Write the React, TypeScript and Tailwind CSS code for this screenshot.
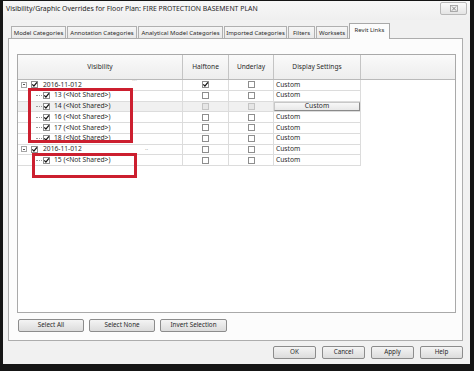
import React from 'react';

type Row = { level: 0 | 1; label: string; half?: boolean; sel?: boolean; dots?: string; dotsLeft?: number; dotsTop?: number };

const rows: Row[] = [
  { level: 0, label: '2016-11-012', half: true, dots: '···', dotsLeft: 114, dotsTop: -3 },
  { level: 1, label: '13 (<Not Shared>)' },
  { level: 1, label: '14 (<Not Shared>)', sel: true },
  { level: 1, label: '16 (<Not Shared>)' },
  { level: 1, label: '17 (<Not Shared>)' },
  { level: 1, label: '18 (<Not Shared>)' },
  { level: 0, label: '2016-11-012', dots: '..', dotsLeft: 127, dotsTop: 0 },
  { level: 1, label: '15 (<Not Shared>)' },
];

function Cb({ checked, disabled }: { checked?: boolean; disabled?: boolean }) {
  return (
    <span
      className={
        disabled
          ? 'relative inline-block w-[7px] h-[7px] border border-[#c4c4c4] bg-[#e6e6e6] shrink-0'
          : 'relative inline-block w-[7px] h-[7px] border border-[#8e8e8e] bg-white shrink-0'
      }
    >
      {checked && (
        <svg className="absolute left-[-1px] top-[-1px]" width="7" height="7" viewBox="0 0 7 7">
          <path d="M1.3 3.4 L2.9 5.1 L5.9 1.4" fill="none" stroke="#111" strokeWidth="1.3" />
        </svg>
      )}
    </span>
  );
}

function Expand() {
  return (
    <span className="relative inline-block w-[6px] h-[6px] border border-[#a4a4a4] bg-white shrink-0">
      <span className="absolute left-[1px] top-[1.5px] w-[2px] h-[1px] bg-[#555]" />
    </span>
  );
}

function Btn({ children, w }: { children: React.ReactNode; w: string }) {
  return (
    <div
      className={`${w} h-[13px] flex items-center justify-center rounded-[2px] border border-[#8c8c8c] bg-gradient-to-b from-[#f4f4f4] to-[#dcdcdc] text-[6.3px] text-[#2a2a2a] leading-none`}
    >
      {children}
    </div>
  );
}

const tabs = [
  { t: 'Model Categories', w: 'w-[55px]' },
  { t: 'Annotation Categories', w: 'w-[70px]' },
  { t: 'Analytical Model Categories', w: 'w-[85px]' },
  { t: 'Imported Categories', w: 'w-[63px]' },
  { t: 'Filters', w: 'w-[27px]' },
  { t: 'Worksets', w: 'w-[32px]' },
];

export default function App() {
  return (
    <div className="relative w-[474px] h-[371px] bg-[#151515] pl-[3px] pr-[4px] pt-[1px] pb-[7px] font-['Noto_Sans','Liberation_Sans',sans-serif] text-[#2a2a2a]">
      <div className="w-full h-full bg-[#f1f1f1] flex flex-col">
        {/* title bar */}
        <div className="h-[19px] shrink-0 flex items-start justify-between pl-[3px] pr-[3px] bg-gradient-to-b from-[#f7f7f7] to-[#efefef]">
          <div className="pt-[5px] text-[6.9px] leading-none whitespace-nowrap text-[#1f1f1f]">
            Visibility/Graphic Overrides for Floor Plan: FIRE PROTECTION BASEMENT PLAN
          </div>
          <div className="mt-[1px] w-[27px] h-[13px] rounded-[2px] border border-[#b8b8b8] bg-gradient-to-b from-[#fafafa] to-[#e4e4e4] flex items-center justify-center">
            <svg width="8" height="7" viewBox="0 0 8 7">
              <rect x="0.5" y="0.5" width="7" height="6" fill="none" stroke="#9a9a9a" strokeWidth="0.8" />
              <path d="M2 1.5 L6 5.5 M6 1.5 L2 5.5" stroke="#7a7a7a" strokeWidth="0.9" />
            </svg>
          </div>
        </div>

        {/* content */}
        <div className="flex-1 flex flex-col pl-[5px] pr-[7px]">
          {/* tabs */}
          <div className="mt-[3px] h-[15px] flex items-end gap-[1px] pl-[3px] relative z-10">
            {tabs.map((tb) => (
              <div
                key={tb.t}
                className={`${tb.w} h-[12px] border border-b-0 border-[#b0b0b0] bg-gradient-to-b from-[#f6f6f6] to-[#e9e9e9] flex items-center justify-center text-[6px] leading-none whitespace-nowrap`}
              >
                {tb.t}
              </div>
            ))}
            <div className="w-[41px] h-[16px] -mb-[1px] border border-b-0 border-[#a8a8a8] bg-[#fcfcfc] flex items-start justify-center pt-[3px] text-[6px] leading-none whitespace-nowrap">
              Revit Links
            </div>
          </div>

          {/* panel */}
          <div className="h-[303px] shrink-0 border border-[#adadad] bg-[#fcfcfc] pt-[15px] pl-[8px] pr-[6px] flex flex-col">
            <div className="h-[259px] border border-[#a9a9a9] bg-white flex flex-col">
              {/* header */}
              <div className="h-[25px] shrink-0 flex border-b border-[#b9b9b9] bg-gradient-to-b from-[#fafafa] to-[#ededed] text-[6.6px] leading-none">
                <div className="w-[165px] border-r border-[#c4c4c4] flex items-center justify-center">Visibility</div>
                <div className="w-[46px] border-r border-[#c4c4c4] flex items-center justify-center">Halftone</div>
                <div className="w-[45px] border-r border-[#c4c4c4] flex items-center justify-center">Underlay</div>
                <div className="w-[87px] border-r border-[#c4c4c4] flex items-center justify-center">Display Settings</div>
                <div className="flex-1" />
              </div>

              {/* rows */}
              {rows.map((r, i) => (
                <div key={i} className="h-[10.75px] shrink-0 flex text-[6.7px] leading-none">
                  <div
                    className={`relative w-[165px] border-r border-b border-[#dcdcdc] flex items-center ${r.sel ? 'bg-[#f0f0f0]' : ''} ${r.level === 0 ? 'pl-[3px]' : 'pl-[18px]'}`}
                  >
                    {r.level === 0 ? (
                      <>
                        <Expand />
                        <span className="ml-[4px] flex">
                          <Cb checked />
                        </span>
                        <span className="ml-[5px] whitespace-nowrap">{r.label}</span>
                      </>
                    ) : (
                      <>
                        <span className="w-[6px] border-t border-dotted border-[#9a9a9a] shrink-0" />
                        <span className="ml-[1px] flex">
                          <Cb checked />
                        </span>
                        <span className="ml-[4px] whitespace-nowrap">{r.label}</span>
                      </>
                    )}
                    {r.dots && (
                      <span
                        className="absolute text-[6px] text-[#9a9a9a] leading-none"
                        style={{ left: r.dotsLeft, top: r.dotsTop }}
                      >
                        {r.dots}
                      </span>
                    )}
                  </div>
                  <div className={`w-[46px] border-r border-b border-[#dcdcdc] flex items-center justify-center ${r.sel ? 'bg-[#f0f0f0]' : ''}`}>
                    <Cb checked={r.half} disabled={r.sel} />
                  </div>
                  <div className={`w-[45px] border-r border-b border-[#dcdcdc] flex items-center justify-center ${r.sel ? 'bg-[#f0f0f0]' : ''}`}>
                    <Cb disabled={r.sel} />
                  </div>
                  <div className="w-[87px] border-r border-b border-[#dcdcdc] flex items-center">
                    {r.sel ? (
                      <div className="w-[86px] h-full border border-[#c8c8c8] border-r-[#8a8a8a] border-b-[#8a8a8a] bg-gradient-to-b from-[#f8f8f8] to-[#e8e8e8] flex items-center justify-center">
                        Custom
                      </div>
                    ) : (
                      <span className="pl-[2px]">Custom</span>
                    )}
                  </div>
                  <div className="flex-1" />
                </div>
              ))}
            </div>

            <div className="mt-[6px] ml-[1px] flex gap-[5px]">
              <Btn w="w-[66px]">Select All</Btn>
              <Btn w="w-[66px]">Select None</Btn>
              <Btn w="w-[67px]">Invert Selection</Btn>
            </div>
          </div>

          {/* bottom buttons */}
          <div className="pt-[5px] flex justify-end gap-[6px]">
            <Btn w="w-[43px]">OK</Btn>
            <Btn w="w-[43px]">Cancel</Btn>
            <Btn w="w-[43px]">Apply</Btn>
            <Btn w="w-[43px]">Help</Btn>
          </div>
        </div>
      </div>

      {/* annotation boxes */}
      <div className="absolute left-[28px] top-[88px] w-[105px] h-[55px] border-[3px] border-[#cc1f2f]" />
      <div className="absolute left-[32px] top-[153px] w-[105px] h-[25px] border-[3px] border-[#cc1f2f]" />
    </div>
  );
}
